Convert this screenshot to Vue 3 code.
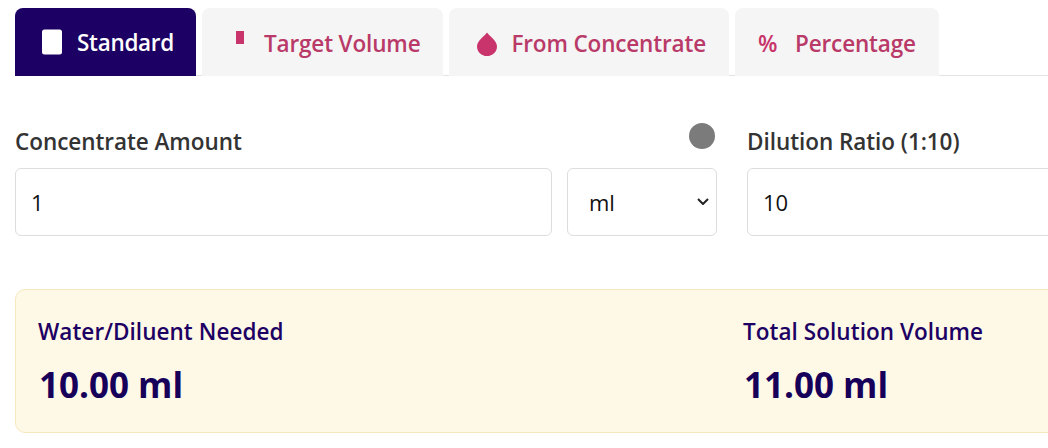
<template>
  <div class="calc">
    <div class="tabs">
      <button
        v-for="t in tabs"
        :key="t.id"
        class="tab"
        :class="{ active: t.id === active }"
        @click="active = t.id"
      >
        <span class="ico" :class="{ 'ico-pct': t.id === 'percentage' }">
          <svg v-if="t.id === 'standard'" width="20" height="26" viewBox="0 0 20 26">
            <rect x="0" y="0.5" width="20" height="25" rx="2.5" fill="currentColor" />
          </svg>
          <svg v-else-if="t.id === 'target'" class="ico-target" width="8" height="13" viewBox="0 0 8 13">
            <rect width="8" height="13" fill="currentColor" />
          </svg>
          <svg v-else-if="t.id === 'concentrate'" width="20" height="24" viewBox="0 0 20 24">
            <path d="M10 0.5 C12 3.6 20 8.6 20 14.4 C20 19.8 15.5 24 10 24 C4.5 24 0 19.8 0 14.4 C0 8.6 8 3.6 10 0.5 Z" fill="currentColor" />
          </svg>
          <span v-else class="pct">%</span>
        </span>
        <span class="tab-text">{{ t.label }}</span>
      </button>
    </div>

    <div class="form">
      <div class="col">
        <div class="label-row">
          <label>Concentrate Amount</label>
          <span class="hint"></span>
        </div>
        <div class="fields">
          <input v-model="amount" class="input grow" type="text" />
          <div class="select-wrap">
            <select v-model="unit" class="input unit">
              <option>ml</option>
              <option>l</option>
              <option>oz</option>
            </select>
            <svg class="chevron" width="12" height="7" viewBox="0 0 12 7">
              <path d="M1 1 L6 6 L11 1" fill="none" stroke="#222" stroke-width="2" />
            </svg>
          </div>
        </div>
      </div>
      <div class="col">
        <div class="label-row">
          <label>Dilution Ratio (1:{{ ratio }})</label>
        </div>
        <div class="fields">
          <input v-model="ratio" class="input grow" type="text" />
        </div>
      </div>
    </div>

    <div class="results">
      <div class="result">
        <div class="result-label">Water/Diluent Needed</div>
        <div class="result-value">{{ water.toFixed(2) }} {{ unit }}</div>
      </div>
      <div class="result">
        <div class="result-label">Total Solution Volume</div>
        <div class="result-value">{{ total.toFixed(2) }} {{ unit }}</div>
      </div>
    </div>
  </div>
</template>

<script setup>
import { computed, ref } from "vue";

const tabs = [
  { id: "standard", label: "Standard" },
  { id: "target", label: "Target Volume" },
  { id: "concentrate", label: "From Concentrate" },
  { id: "percentage", label: "Percentage" },
];

const active = ref("standard");
const amount = ref("1");
const unit = ref("ml");
const ratio = ref("10");

const water = computed(() => Number(amount.value) * Number(ratio.value));
const total = computed(() => water.value + Number(amount.value));
</script>

<style>
html,
body {
  margin: 0;
  overflow: hidden;
  background: #fff;
}
</style>

<style scoped>
.calc {
  width: 1434px;
  padding: 8px 0 0 15px;
  font-family: "Open Sans", "Noto Sans", sans-serif;
}
.tabs {
  display: flex;
  gap: 6px;
  height: 68px;
  box-sizing: border-box;
  border-bottom: 1px solid #e4e4e4;
}
.tab {
  display: flex;
  align-items: center;
  gap: 14px;
  height: 68px;
  padding: 3px 23px 0 28px;
  border: 0;
  border-radius: 8px 8px 0 0;
  background: #f5f5f5;
  color: #c8346b;
  font-family: inherit;
  font-size: 22.5px;
  font-weight: 600;
  letter-spacing: -0.15px;
  cursor: pointer;
}
.tab-text {
  color: #b93a68;
}
.tab.active {
  width: 181px;
  gap: 15px;
  padding: 0 0 0 27px;
  background: #1d0063;
  color: #fff;
  letter-spacing: -0.3px;
}
.tab.active .tab-text {
  color: #fff;
}
.ico {
  display: flex;
  align-items: center;
  justify-content: center;
  width: 20px;
}
.ico-target {
  margin-bottom: 12px;
}
.ico-pct {
  justify-content: flex-start;
  margin: 0 3px 0 -5px;
}
.pct {
  font-size: 22.5px;
  font-weight: 600;
}
.form {
  display: grid;
  grid-template-columns: 1fr 1fr;
  gap: 30px;
  margin-top: 47px;
}
.label-row {
  display: flex;
  justify-content: space-between;
  height: 45px;
}
label {
  margin-top: 3px;
  color: #333;
  font-size: 22.5px;
  font-weight: 600;
  letter-spacing: -0.05px;
}
.hint {
  width: 26px;
  height: 26px;
  margin-right: 2px;
  border-radius: 50%;
  background: #7b7b7b;
}
.fields {
  display: flex;
  gap: 15px;
}
.input {
  box-sizing: border-box;
  height: 68px;
  padding: 0 15px;
  border: 1px solid #ddd;
  border-radius: 6px;
  background: #fff;
  color: #111;
  font-family: inherit;
  font-size: 22px;
}
.grow {
  flex: 1;
  min-width: 0;
}
.select-wrap {
  position: relative;
  width: 150px;
}
.unit {
  width: 100%;
  padding-left: 21px;
  appearance: none;
}
.chevron {
  position: absolute;
  top: 30px;
  right: 8px;
  pointer-events: none;
}
.results {
  display: grid;
  grid-template-columns: 1fr 1fr;
  gap: 22px;
  height: 144px;
  box-sizing: border-box;
  margin-top: 53px;
  padding: 26px 22px 0;
  border: 1px solid #f7e9bd;
  border-radius: 10px;
  background: #fef8e7;
}
.result-label {
  color: #1d0063;
  font-size: 22.5px;
  font-weight: 600;
  letter-spacing: 0.05px;
}
.result-value {
  margin-top: 14px;
  padding-left: 1px;
  color: #170059;
  font-size: 35px;
  font-weight: 700;
}
</style>
